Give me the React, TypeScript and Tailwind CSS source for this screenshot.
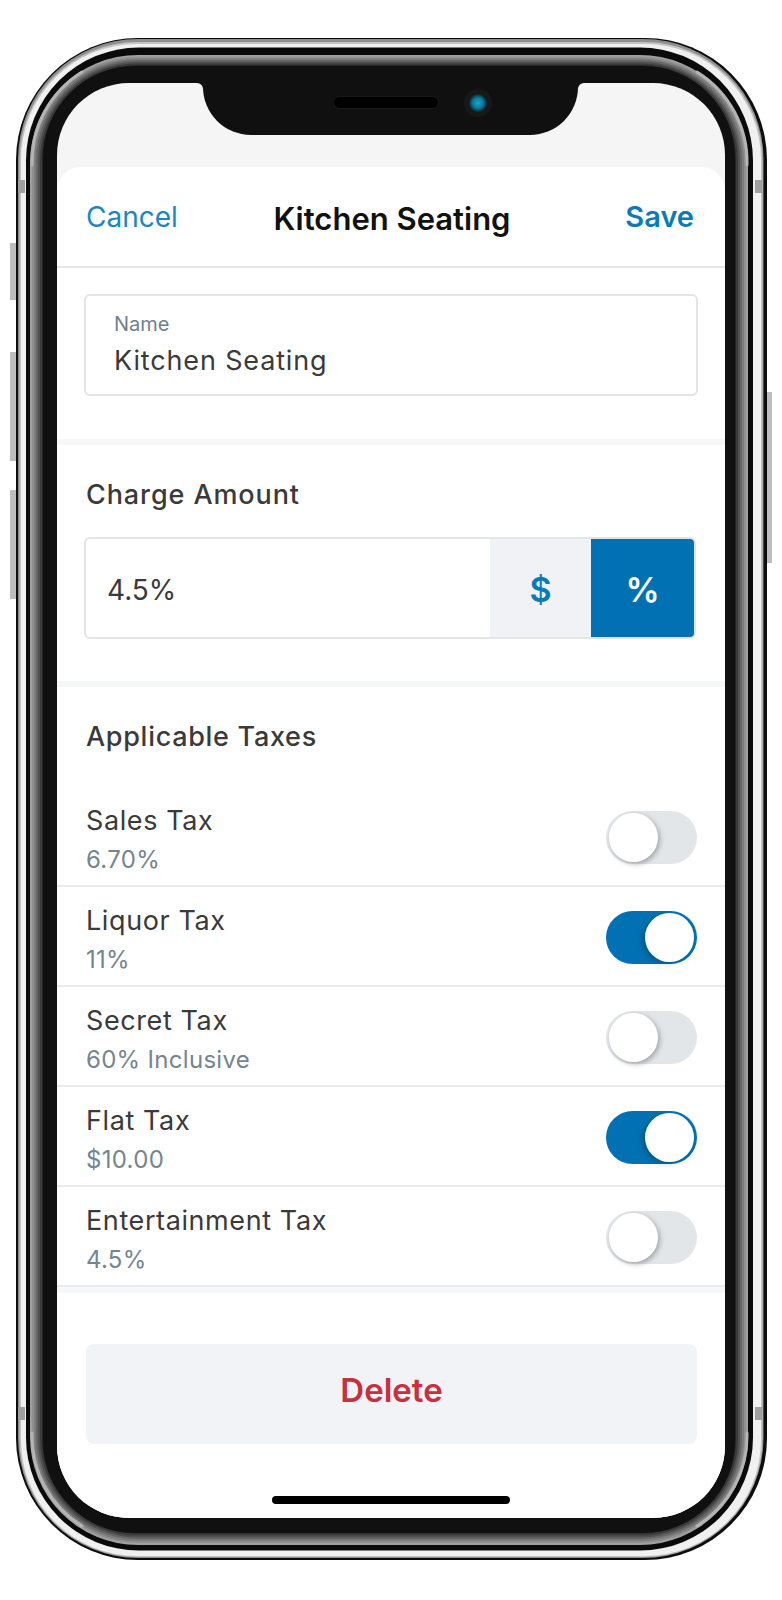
const font = "font-['Inter','Liberation_Sans',sans-serif]";

const shades = ["#a0a0a0", "#909090", "#7c7c7c", "#666666", "#505050", "#3a3a3a", "#252525"];

function Bezel() {
  // the phone's metal edge, stacked from the outside in
  return (
    <svg className="absolute inset-0" width="782" height="1600" viewBox="0 0 782 1600">
      <rect x="10" y="243" width="8" height="57" fill="#bdbdbd" />
      <rect x="10" y="352" width="8" height="109" fill="#bdbdbd" />
      <rect x="10" y="490" width="8" height="109" fill="#bdbdbd" />
      <rect x="765" y="392" width="7" height="171" fill="#bdbdbd" />
      <rect x="16" y="38" width="751" height="1522" rx="122" fill="#0d0d0d" />
      <rect x="18" y="39" width="745.5" height="1519" rx="120" fill="#8f8f8f" />
      <rect x="19.5" y="42" width="743" height="1515" rx="118" fill="#c4c4c4" />
      <rect x="21" y="44" width="740" height="1512" rx="116" fill="#f0f0f0" />
      <rect x="26" y="47.5" width="727" height="1503" rx="113" fill="#0a0a0a" />
      {shades.map((c, i) => (
        <rect
          key={c}
          x={30 + i * 2}
          y={55 + i * 1.7}
          width={718 - i * 4}
          height={1490 - i * 3.6}
          rx={108 - i * 2.2}
          fill={c}
        />
      ))}
      <rect x="43" y="66" width="692" height="1467" rx="92" fill="#101010" />
      {/* corner glints */}
      <g fill="none" stroke="#b4b4b4" strokeWidth="3" strokeLinecap="round">
        <path d="M82 72A106 106 0 0 0 32 165" />
        <path d="M697 72A106 106 0 0 1 747 165" />
        <path d="M82 1526A106 106 0 0 1 32 1433" />
        <path d="M697 1526A106 106 0 0 0 747 1433" />
      </g>
      <rect x="18" y="180" width="7" height="13" fill="#a0a0a0" />
      <rect x="755" y="180" width="7" height="13" fill="#a0a0a0" />
      <rect x="18" y="1407" width="7" height="13" fill="#a0a0a0" />
      <rect x="755" y="1407" width="7" height="13" fill="#a0a0a0" />
    </svg>
  );
}

function Toggle({ on }: { on?: boolean }) {
  if (on) {
    return (
      <div className="mt-[2px] w-[91px] h-[53px] rounded-full bg-[#0271b3] flex items-center justify-end pr-[3px]">
        <div className="w-[49px] h-[49px] rounded-full bg-white shadow-[-3px_2px_5px_rgba(0,0,0,0.2)]" />
      </div>
    );
  }
  return (
    <div className="mt-[2px] w-[91px] h-[53px] rounded-full bg-[#e2e6e8] flex items-center pl-[3px]">
      <div className="w-[49px] h-[49px] rounded-full bg-white shadow-[2px_2px_5px_rgba(0,0,0,0.28)]" />
    </div>
  );
}

const taxes = [
  { name: "Sales Tax", sub: "6.70%", on: false },
  { name: "Liquor Tax", sub: "11%", on: true },
  { name: "Secret Tax", sub: "60% Inclusive", on: false },
  { name: "Flat Tax", sub: "$10.00", on: true },
  { name: "Entertainment Tax", sub: "4.5%", on: false },
];

export default function App() {
  return (
    <div className={`relative w-[782px] h-[1600px] bg-white overflow-hidden ${font}`}>
      <Bezel />
      <div className="relative ml-[57px] top-[83px] w-[668px] h-[1435px] rounded-[72px] overflow-hidden bg-[#f5f5f5]">
        {/* notch */}
        <div className="absolute left-[146px] top-0 w-[375px] h-[52px] bg-[#101010] rounded-b-[48px] flex items-start">
          <div className="ml-[131px] mt-[14px] w-[104px] h-[11px] rounded-full bg-black shadow-[0_0_0_1px_#181818]" />
          <div className="ml-[26px] mt-[6px] w-[28px] h-[28px] rounded-full bg-[#181818] flex items-center justify-center">
            <div className="w-[18px] h-[18px] rounded-full bg-[radial-gradient(circle,#1ea5c6_0%,#0b7c9c_40%,#06222e_72%)]" />
          </div>
        </div>
        <svg className="absolute left-[140px] top-0" width="6" height="6" viewBox="0 0 6 6">
          <path d="M0 0H6V6A6 6 0 0 0 0 0Z" fill="#101010" />
        </svg>
        <svg className="absolute left-[521px] top-0" width="6" height="6" viewBox="0 0 6 6">
          <path d="M6 0H0V6A6 6 0 0 1 6 0Z" fill="#101010" />
        </svg>

        <div className="h-[84px]" />
        <div className="h-[1351px] bg-white rounded-t-[24px] relative">
          {/* header */}
          <div className="h-[101px] border-b-2 border-[#e6e6e6] flex items-center pl-[29px] pr-[31px]">
            <span className="flex-1 text-[28px] text-[#1a87c2]">Cancel</span>
            <span className="ml-[4px] pt-[6px] text-[31px] font-semibold text-[#111111]">Kitchen Seating</span>
            <span className="flex-1 text-right text-[29px] font-semibold text-[#0a7ab8]">Save</span>
          </div>

          {/* name */}
          <div className="pt-[26px] px-[27px] pb-[43px] border-b-[6px] border-[#f6f7f9]">
            <div className="h-[102px] border-2 border-[#e2e4e6] rounded-[6px] pl-[28px] pt-[15px]">
              <div className="text-[20px] leading-[26px] text-[#6f7f8c]">Name</div>
              <div className="text-[27px] leading-[40px] mt-[4px] tracking-[0.85px] text-[#3a3a3a]">Kitchen Seating</div>
            </div>
          </div>

          {/* charge amount */}
          <div className="pt-[32px] pl-[29px] pr-[29px] pb-[42px] border-b-[6px] border-[#f6f7f9]">
            <div className="text-[27px] leading-[36px] font-medium tracking-[0.9px] text-[#3a3a3a] mb-[24px]">Charge Amount</div>
            <div className="h-[102px] -ml-[2px] border-2 border-[#e2e4e6] rounded-[6px] flex items-stretch overflow-hidden">
              <div className="flex-1 flex items-center pl-[21px] pt-[3px] text-[28px] text-[#3a3a3a]">4.5%</div>
              <div className="w-[101px] bg-[#f0f2f6] flex items-center justify-center pt-[2px] text-[34px] font-semibold text-[#0a7ab8]">$</div>
              <div className="w-[103px] bg-[#0271b3] flex items-center justify-center pt-[2px] text-[34px] font-semibold text-white">%</div>
            </div>
          </div>

          {/* taxes */}
          <div className="pt-[32px]">
            <div className="px-[29px] text-[27px] leading-[36px] font-medium tracking-[0.7px] text-[#3a3a3a] mb-[32px]">Applicable Taxes</div>
            {taxes.map((t) => (
              <div key={t.name} className="h-[100px] flex items-center justify-between pl-[29px] pr-[28px] border-b-2 border-[#e9ebee]">
                <div className="pt-[7px]">
                  <div className="text-[27px] leading-[36px] tracking-[0.6px] text-[#3a3a3a]">{t.name}</div>
                  <div className="mt-[5px] text-[24px] leading-[32px] tracking-[0.3px] text-[#75858f]">{t.sub}</div>
                </div>
                <Toggle on={t.on} />
              </div>
            ))}
            <div className="h-[6px] bg-[#f6f7f9]" />
          </div>

          {/* delete */}
          <div className="pl-[29px] pr-[28px] pt-[51px]">
            <div className="h-[100px] rounded-[8px] bg-[#f1f3f6] flex items-center justify-center pb-[6px] text-[33px] font-semibold text-[#c8303f]">Delete</div>
          </div>

          <div className="absolute left-[215px] bottom-[14px] w-[238px] h-[8px] rounded-full bg-black" />
        </div>
      </div>
    </div>
  );
}
